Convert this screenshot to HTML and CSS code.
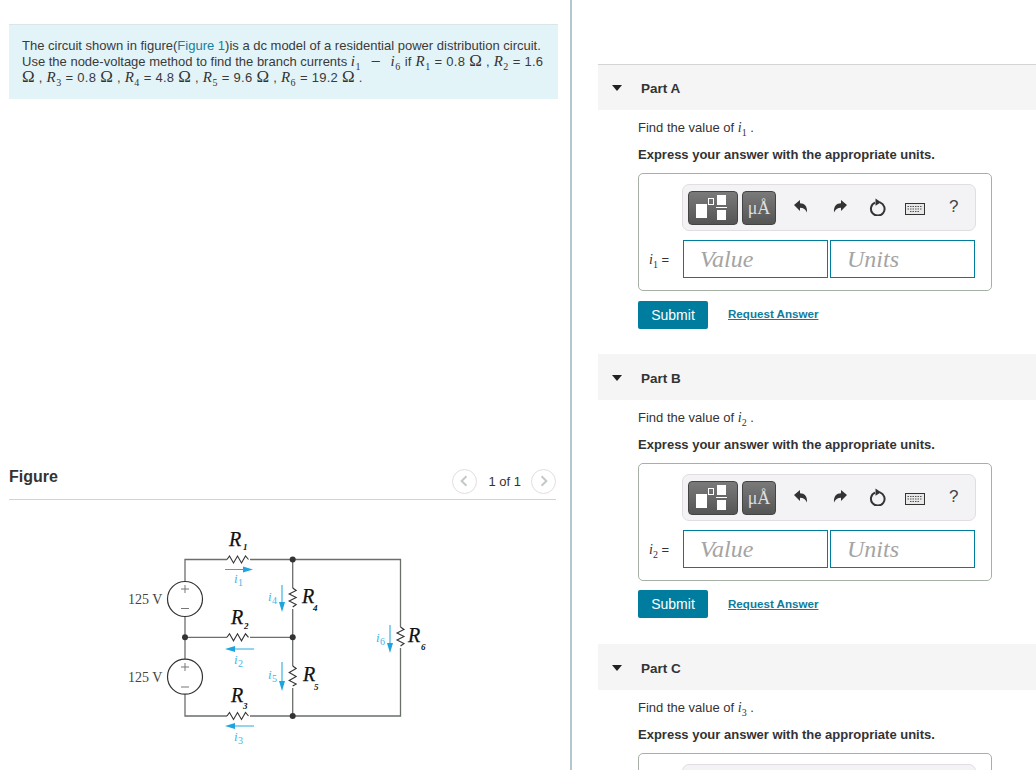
FILE: index.html
```html
<!DOCTYPE html>
<html lang="en">
<head>
<meta charset="utf-8">
<title>Circuit problem</title>
<link rel="stylesheet" href="styles.css">
</head>
<body>
<svg class="defs" width="0" height="0" aria-hidden="true">
  <symbol id="ic-undo" viewBox="0 0 16 16"><path d="M1 7 7 2V5.200C11.500 5.200 14.500 8.200 14 14.500 12.700 11.200 10.500 9.700 7 9.700V13Z"/></symbol>
  <symbol id="ic-redo" viewBox="0 0 16 16"><path d="M15 7 9 2V5.200C4.500 5.200 1.500 8.200 2 14.500 3.300 11.200 5.500 9.700 9 9.700V13Z"/></symbol>
  <symbol id="ic-reset" viewBox="0 0 18 18"><path class="ring" d="M6 4.600A6.800 6.800 0 1 0 11 4.400"/><path d="M6.500 .5 12 4.300 6.500 7.800Z"/></symbol>
  <symbol id="ic-keys" viewBox="0 0 20 12"><rect x=".5" y=".5" width="19" height="11" fill="#e8e8e8" stroke="#333"/><path class="keys" d="M2.500 3.500h15M2.500 6h15M5 8.500h10"/></symbol>
</svg>
<main class="page">
  <section class="left">
    <div class="problem">
      The circuit shown in figure(<a class="link" href="#f">Figure 1</a>)is a dc model of a residential power distribution circuit.<br>
      Use the node-voltage method to find the branch currents <i class="m">i<sub>1</sub></i><span class="minus">&minus;</span><span class="wide"><i class="m">i<sub>6</sub></i> if <i class="m">R<sub>1</sub></i> = 0.8 <span class="m om">Ω</span> , <i class="m">R<sub>2</sub></i> = 1.6</span><br>
      <span class="wide"><span class="m om">Ω</span> , <i class="m">R<sub>3</sub></i> = 0.8 <span class="m om">Ω</span> , <i class="m">R<sub>4</sub></i> = 4.8 <span class="m om">Ω</span> , <i class="m">R<sub>5</sub></i> = 9.6 <span class="m om">Ω</span> , <i class="m">R<sub>6</sub></i> = 19.2 <span class="m om">Ω</span> .</span>
    </div>
    <div class="fig-head" id="f">
      <h2 class="fig-title">Figure</h2>
      <div class="pager">
        <span class="pg-btn"><svg viewBox="0 0 24 24" width="24" height="24"><path d="M14 7 9 12l5 5"/></svg></span>
        <span class="pg-text">1 of 1</span>
        <span class="pg-btn"><svg viewBox="0 0 24 24" width="24" height="24"><path d="M10 7l5 5-5 5"/></svg></span>
      </div>
    </div>
    <svg class="circuit" viewBox="110 520 330 250" width="330" height="250">
      <path class="wire" d="M185 581V559.500H227M250 559.500H400.500V627M400.500 648V716H250M227 716H185V694M185 659V616.500M185 637.300H227M250 637.300H292.700M292.700 559.500V588M292.700 609V666M292.700 688V716"/>
      <path class="res" d="M227 559.500l2.500-3.500 4 7 4-7 4 7 4-7 3 3.500M227 637.300l2.500-3.500 4 7 4-7 4 7 4-7 3 3.500M227 716l2.500-3.500 4 7 4-7 4 7 4-7 3 3.500"/>
      <path class="res" d="M292.700 588l3.500 2.500-7 3.500 7 3.500-7 3.500 7 3.500-3.500 2.500M292.700 666l3.500 2.500-7 4 7 4-7 4 7 3.500-3.500 2M400.500 627l3.500 2.500-7 3.500 7 3.500-7 3.500 7 3.500-3.500 2.500"/>
      <circle class="src" cx="185" cy="599" r="17.500"/><circle class="src" cx="185" cy="676.700" r="17.500"/>
      <path class="sign" d="M181 589h8M185 585v8M181 608.500h8M181 667h8M185 663v8M181 687h8"/>
      <circle class="node" cx="185" cy="637.300" r="3"/><circle class="node" cx="292.700" cy="559.500" r="3"/><circle class="node" cx="292.700" cy="637.300" r="3"/><circle class="node" cx="292.700" cy="716" r="3"/>
      <path class="cur" d="M225 569.500h24M229 649h25M229 726h25M282 585v17M282 662v19M390 625v18"/>
      <path class="cur-h" d="M253 569.500l-10-3v6ZM225 649l10-3v6ZM225 726l10-3v6ZM282 612l-3-10h6ZM282 691l-3-10h6ZM390 653l-3-10h6Z"/>
      <text class="volt" x="128" y="604">125 V</text><text class="volt" x="128" y="682">125 V</text>
      <text class="rl" x="229" y="546">R</text><text class="rs" x="243" y="550">1</text>
      <text class="rl" x="231" y="624">R</text><text class="rs" x="244" y="629">2</text>
      <text class="rl" x="231" y="702">R</text><text class="rs" x="243" y="709">3</text>
      <text class="rl" x="302" y="603">R</text><text class="rs" x="313" y="611">4</text>
      <text class="rl" x="303" y="681">R</text><text class="rs" x="314" y="690">5</text>
      <text class="rl" x="408" y="642">R</text><text class="rs" x="421" y="650">6</text>
      <text class="il" x="234" y="583">i</text><text class="is" x="238" y="586">1</text>
      <text class="il" x="234" y="664">i</text><text class="is" x="238" y="667">2</text>
      <text class="il" x="234" y="741">i</text><text class="is" x="238" y="744">3</text>
      <text class="il" x="268" y="601">i</text><text class="is" x="272" y="604">4</text>
      <text class="il" x="268" y="679">i</text><text class="is" x="272" y="682">5</text>
      <text class="il" x="376" y="642">i</text><text class="is" x="380" y="645">6</text>
    </svg>
  </section>

  <section class="right">
    <article class="part">
      <header class="part-head"><span class="caret"></span><h3 class="part-title">Part A</h3></header>
      <div class="part-body">
        <p class="find">Find the value of <i class="m">i<sub>1</sub></i> .</p>
        <p class="express">Express your answer with the appropriate units.</p>
        <div class="card">
          <div class="toolbar">
            <span class="tbtn tpl"><span class="b1"></span><span class="b2"></span><span class="frac"><span></span><span></span></span></span>
            <span class="tbtn unit">μÅ</span>
            <svg class="ti undo"><use href="#ic-undo"/></svg>
            <svg class="ti redo"><use href="#ic-redo"/></svg>
            <svg class="ti reset"><use href="#ic-reset"/></svg>
            <svg class="ti kb"><use href="#ic-keys"/></svg>
            <span class="help">?</span>
          </div>
          <div class="answer">
            <span class="var"><i class="m">i<sub>1</sub></i> =</span>
            <span class="field">Value</span>
            <span class="field">Units</span>
          </div>
        </div>
        <div class="actions"><button class="submit">Submit</button><a class="req" href="#a">Request Answer</a></div>
      </div>
    </article>
    <article class="part">
      <header class="part-head"><span class="caret"></span><h3 class="part-title">Part B</h3></header>
      <div class="part-body">
        <p class="find">Find the value of <i class="m">i<sub>2</sub></i> .</p>
        <p class="express">Express your answer with the appropriate units.</p>
        <div class="card">
          <div class="toolbar">
            <span class="tbtn tpl"><span class="b1"></span><span class="b2"></span><span class="frac"><span></span><span></span></span></span>
            <span class="tbtn unit">μÅ</span>
            <svg class="ti undo"><use href="#ic-undo"/></svg>
            <svg class="ti redo"><use href="#ic-redo"/></svg>
            <svg class="ti reset"><use href="#ic-reset"/></svg>
            <svg class="ti kb"><use href="#ic-keys"/></svg>
            <span class="help">?</span>
          </div>
          <div class="answer">
            <span class="var"><i class="m">i<sub>2</sub></i> =</span>
            <span class="field">Value</span>
            <span class="field">Units</span>
          </div>
        </div>
        <div class="actions"><button class="submit">Submit</button><a class="req" href="#a">Request Answer</a></div>
      </div>
    </article>
    <article class="part">
      <header class="part-head"><span class="caret"></span><h3 class="part-title">Part C</h3></header>
      <div class="part-body">
        <p class="find">Find the value of <i class="m">i<sub>3</sub></i> .</p>
        <p class="express">Express your answer with the appropriate units.</p>
        <div class="card">
          <div class="toolbar"></div>
        </div>
      </div>
    </article>
  </section>
</main>
</body>
</html>
```
FILE: styles.css
```css
* { box-sizing: border-box; }
html, body { margin: 0; height: 770px; overflow: hidden; background: #fff; }
body { font-family: "Liberation Sans", Arial, sans-serif; color: #333; font-size: 13px; }
.defs { position: absolute; }
.page { display: grid; grid-template-columns: 572px 1fr; height: 770px; overflow: hidden; }
.left { border-right: 2px solid #b4c6d0; padding: 24px 0 0 9px; overflow: hidden; }
.problem { width: 549px; height: 75px; padding: 13px 13px 0; background: #e3f4f8; line-height: 16px; font-size: 13px; color: #3a3a3a; border-top: 1px solid #dbe6e8; white-space: nowrap; }
.wide { letter-spacing: .27px; }
.minus { display: inline-block; margin: 0 11px 0 11px; transform: scaleX(1.300); }
.link { color: #1380a0; text-decoration: none; }
.m { font-family: "Liberation Serif", "DejaVu Serif", serif; font-size: 14px; line-height: 0; color: #333; }
.problem i.m { font-size: 15px; letter-spacing: .5px; }
.m sub { font-size: 10px; line-height: 0; font-style: normal; }
.om { font-size: 17px; }
.fig-head { width: 547px; margin-top: 362px; height: 39px; display: flex; align-items: center; justify-content: space-between; border-bottom: 1px solid #cfd6d2; padding-bottom: 6px; }
.fig-title { margin: 0; font-size: 16px; font-weight: bold; color: #333; }
.pager { display: flex; align-items: center; gap: 10px; margin-top: 8px; }
.pg-btn { width: 25px; height: 25px; border: 1px solid #e3dde3; border-radius: 50%; display: flex; align-items: center; justify-content: center; }
.pg-btn path { fill: none; stroke: #c2c8c8; stroke-width: 2; }
.pg-text { font-size: 13px; color: #333; margin-left: 1px; }
.circuit { display: block; margin: 20px 0 0 101px; }
.wire { fill: none; stroke: #6a6f6a; stroke-width: 1.300; }
.res { fill: none; stroke: #333; stroke-width: 1.100; }
.src { fill: #fff; stroke: #333; stroke-width: 1.200; }
.sign { fill: none; stroke: #777; stroke-width: 1; }
.node { fill: #333; }
.cur { fill: none; stroke: #29abe2; stroke-width: 1.100; }
.cur-h { fill: #1ea5e0; }
.volt { font-family: "Liberation Serif", serif; font-size: 14px; fill: #444; }
.rl { font-family: "Liberation Serif", serif; font-style: italic; font-size: 20px; fill: #111; stroke: #111; stroke-width: .25; }
.rs { font-family: "Liberation Serif", serif; font-style: italic; font-weight: bold; font-size: 9px; fill: #111; }
.il { font-family: "Liberation Serif", serif; font-style: italic; font-size: 13px; fill: #45b4e6; }
.is { font-family: "Liberation Serif", serif; font-size: 10px; fill: #45b4e6; }
.right { padding: 64px 0 0 26px; min-width: 0; overflow: hidden; }
.part { height: 289.500px; }
.part:first-child { height: 290px; }
.part-head { height: 46px; background: #f5f5f5; display: flex; align-items: center; padding: 2px 0 0 14px; border-top: 1px solid transparent; }
.part:first-child .part-head { border-top-color: #d4d4d4; }
.caret { width: 0; height: 0; border-left: 5.500px solid transparent; border-right: 5.500px solid transparent; border-top: 6px solid #222; margin-top: -1px; }
.part-title { margin: 0 0 0 19px; font-size: 13.500px; font-weight: bold; color: #333; }
.part-body { padding-left: 40px; }
.find { margin: 0; height: 36px; padding-top: 9px; line-height: 17px; font-size: 13px; }
.express { margin: 0; height: 27px; line-height: 17px; font-size: 13px; font-weight: bold; }
.card { width: 354px; height: 118px; padding: 10px 15px 0 43px; border: 1px solid #a6b0a6; border-radius: 5px; background: #fff; }
.toolbar { width: 294px; height: 47px; border: 1px solid #e2dde2; border-radius: 7px; background: #f3f2f5; display: flex; align-items: center; padding-left: 5px; position: relative; }
.tbtn { display: block; height: 34px; border: 1px solid #444; border-radius: 4px; background: linear-gradient(#7a7a7a, #555); color: #fff; position: relative; }
.tpl { width: 50px; }
.tpl .b1 { position: absolute; left: 7px; top: 12px; width: 11px; height: 14px; background: #fff; }
.tpl .b2 { position: absolute; left: 19px; top: 6px; width: 6px; height: 7px; border: 1px solid #fff; }
.frac { position: absolute; left: 28px; top: 3px; width: 9px; display: flex; flex-direction: column; gap: 5px; }
.frac::after { content: ""; position: absolute; left: -1px; top: 12px; width: 11px; height: 1px; background: #fff; }
.frac span { height: 10px; background: #fff; display: block; }
.unit { width: 34px; margin-left: 4px; font-family: "Liberation Serif", serif; font-size: 18px; line-height: 33px; text-align: center; color: #dedede; }
.ti { position: absolute; fill: #333; }
.undo { left: 110px; top: 13px; width: 16px; height: 16px; }
.redo { left: 149px; top: 13px; width: 16px; height: 16px; }
.reset { left: 186px; top: 13px; width: 18px; height: 18px; }
.ring { fill: none; stroke: #333; stroke-width: 2; }
.kb { left: 222px; top: 18px; width: 20px; height: 12px; }
.keys { fill: none; stroke: #555; stroke-width: 1; stroke-dasharray: 1.500 1; }
.help { position: absolute; left: 266px; top: 13px; font-size: 17px; line-height: 18px; color: #444; }
.answer { display: flex; align-items: center; margin: 9px 0 0 -33px; }
.var { width: 34px; font-size: 13px; white-space: nowrap; }
.field { width: 145px; height: 38px; border: 1px solid #007c9e; padding-left: 16px; font-family: "Liberation Serif", serif; font-style: italic; font-size: 24px; line-height: 36px; color: #a4a4a4; }
.field + .field { margin-left: 2px; }
.actions { display: flex; align-items: center; margin-top: 9px; }
.part:first-child .actions { margin-top: 10px; }
.part:first-child .req { margin-bottom: 4px; }
.submit { width: 70px; height: 28px; padding: 0; border: 0; border-radius: 2px; background: #007c9e; color: #fff; font: 14px "Liberation Sans", Arial, sans-serif; }
.req { margin: 0 0 2px 20px; font-size: 11.600px; font-weight: bold; color: #0f7c9c; }
```
